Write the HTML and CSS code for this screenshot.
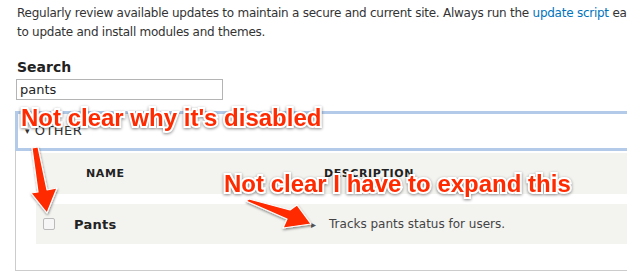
FILE: index.html
```html
<!DOCTYPE html>
<html>
<head>
<meta charset="utf-8">
<link rel="stylesheet" href="styles.css">
</head>
<body>
<div class="page">
  <p class="intro">Regularly review available updates to maintain a secure and current site. Always run the <a href="#">update script</a> each time you update<br>to update and install modules and themes.</p>
  <div class="search">
    <label class="search-label">Search</label>
    <div class="search-input">pants</div>
  </div>
  <div class="fieldset">
    <div class="legend"><span class="legend-arrow">&#9662;</span> OTHER</div>
    <div class="table">
      <div class="thead">
        <div class="th th-name">NAME</div>
        <div class="th th-desc">DESCRIPTION</div>
      </div>
      <div class="row">
        <div class="cell-check"><span class="checkbox"></span></div>
        <div class="cell-name">Pants</div>
        <div class="cell-desc"><span class="expander">&#9656;</span>Tracks pants status for users.</div>
      </div>
    </div>
  </div>
</div>
<svg class="arrows" width="627" height="277" viewBox="0 0 627 277">
  <defs>
    <filter id="sh" x="-30%" y="-30%" width="160%" height="160%">
      <feDropShadow dx="0.5" dy="1.5" stdDeviation="1.2" flood-color="#000" flood-opacity="0.45"/>
    </filter>
  </defs>
  <g filter="url(#sh)" fill="#ff2a00" stroke="#fff" stroke-width="1.2" stroke-linejoin="round">
    <polygon points="32,148 38,147 47,190 57,188 47,213 31,193 38,192"/>
    <polygon points="246,201 249,199 290,210 297,205 311,224 283,228 287,219"/>
  </g>
</svg>
<div class="note note-1">Not clear why it's disabled</div>
<div class="note note-2">Not clear I have to expand this</div>
</body>
</html>
```
FILE: styles.css
```css
html, body {
  margin: 0;
  padding: 0;
  background: #fff;
  overflow: hidden;
  width: 627px;
  height: 277px;
}
body {
  font-family: "DejaVu Sans", "Open Sans", sans-serif;
  color: #333;
  position: relative;
}
.page {
  padding: 4px 0 0 16px;
  width: 700px;
}
.intro {
  margin: 0;
  font-size: 12px;
  letter-spacing: -0.25px;
  line-height: 19px;
  padding-left: 1px;
  white-space: nowrap;
  color: #333;
}
.intro a {
  color: #0074bd;
  text-decoration: none;
}
.search {
  margin-top: 17px;
}
.search-label {
  display: block;
  font-weight: bold;
  font-size: 14px;
  line-height: 17px;
  padding-left: 1px;
  color: #222;
}
.search-input {
  margin-top: 3px;
  width: 202px;
  height: 19px;
  border: 1px solid #b4b4b4;
  font-size: 13px;
  line-height: 19px;
  padding-left: 3px;
  color: #222;
  box-sizing: content-box;
}
.fieldset {
  margin-top: 11px;
  border: 1px solid #ccc;
  border-top: none;
  height: 160px;
  box-sizing: border-box;
  margin-left: -1px;
}
.legend {
  height: 34px;
  border: 3px solid #b3cbe9;
  margin: 0 0 0 -1px;
  font-size: 13px;
  line-height: 34px;
  padding-left: 7px;
  color: #333;
  letter-spacing: 0.5px;
}
.legend-arrow {
  font-size: 9px;
  vertical-align: 1px;
}
.table {
  margin: 2px 0 0 20px;
}
.thead {
  display: flex;
  align-items: center;
  height: 41px;
  background: #f3f3f0;
}
.th {
  font-size: 11px;
  font-weight: bold;
  letter-spacing: 0.6px;
  color: #222;
}
.th-name {
  padding-left: 50px;
  box-sizing: border-box;
  width: 288px;
}
.row {
  display: flex;
  align-items: center;
  margin-top: 10px;
  height: 40px;
  background: #f3f3f0;
}
.cell-check {
  width: 38px;
  padding-left: 7px;
  box-sizing: border-box;
  display: flex;
}
.checkbox {
  width: 10px;
  height: 10px;
  border: 1px solid #bbb;
  border-radius: 2px;
  background: #f6f6f6;
}
.cell-name {
  width: 237px;
  font-size: 13px;
  font-weight: bold;
  color: #222;
  letter-spacing: 0.3px;
}
.cell-desc {
  font-size: 12px;
  color: #444;
}
.expander {
  font-size: 10px;
  color: #555;
  margin-right: 13px;
}
.arrows {
  position: absolute;
  left: 0;
  top: 0;
}
.note {
  position: absolute;
  font-family: "Liberation Sans", Arial, sans-serif;
  font-weight: bold;
  font-size: 24px;
  line-height: 26px;
  color: #ff2a00;
  -webkit-text-stroke: 4px #fff;
  paint-order: stroke fill;
  filter: drop-shadow(0.5px 1.5px 1.5px rgba(0,0,0,0.45));
  white-space: nowrap;
}
.note-1 {
  left: 21px;
  top: 105px;
}
.note-2 {
  left: 224px;
  top: 171px;
}
```
